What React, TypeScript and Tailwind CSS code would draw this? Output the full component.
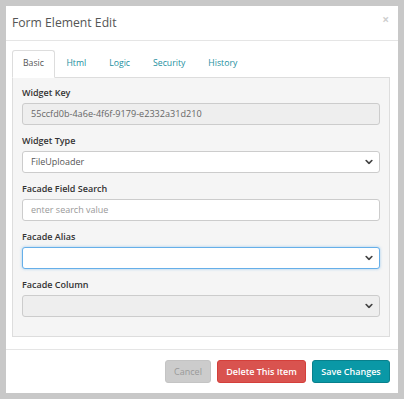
import React from "react";

const Chevron = () => (
  <svg width="8" height="5" viewBox="0 0 8 5" className="absolute right-[6px] top-1/2 -translate-y-1/2">
    <path d="M1.2 1 L4 3.8 L6.8 1" fill="none" stroke="#444" strokeWidth="1.7" strokeLinecap="round" strokeLinejoin="round" />
  </svg>
);

function Field({ label, children }: { label: string; children: React.ReactNode }) {
  return (
    <div className="mb-[9px] flex flex-col">
      <div className="h-[14px] leading-[14px] text-[9px] font-semibold text-[#333] mb-[3px]">{label}</div>
      {children}
    </div>
  );
}

export default function App() {
  const tabs = ["Basic", "Html", "Logic", "Security", "History"];
  return (
    <div className="w-[404px] h-[399px] bg-[#c8c8c8] p-[6px]" style={{ fontFamily: '"Open Sans", sans-serif' }}>
      <div className="w-[392px] h-[387px] bg-white flex flex-col">
        <div className="h-[35px] border-b border-[#e5e5e5] flex items-center justify-between pl-[6px] pr-[9px]">
          <div className="text-[12.2px] text-[#555]">Form Element Edit</div>
          <div className="text-[12px] leading-none text-[#cfcfcf] font-bold -mt-[6px]">×</div>
        </div>
        <div className="h-[308px] pl-[6px] pr-[8px] pt-[10px]">
          <div className="flex h-[27px] items-end border-b border-[#ddd]">
            {tabs.map((t, i) =>
              i === 0 ? (
                <div
                  key={t}
                  className="h-[28px] -mb-px px-[10px] mr-[1px] bg-white border border-[#ddd] border-b-white rounded-t-[3px] flex items-center text-[8.7px] text-[#555]"
                >
                  {t}
                </div>
              ) : (
                <div key={t} className="h-[27px] px-[10.5px] mr-[2px] flex items-center text-[8.7px] text-[#1b8fa0]">
                  {t}
                </div>
              )
            )}
          </div>
          <div className="bg-[#f5f5f5] border border-t-0 border-[#ddd] px-[9px] pt-[8px] pb-[10px]">
            <Field label="Widget Key">
              <div className="h-[22px] bg-[#eeeeee] border border-[#ccc] rounded-[3px] px-[8px] flex items-center text-[9.1px] text-[#666]">
                55ccfd0b-4a6e-4f6f-9179-e2332a31d210
              </div>
            </Field>
            <Field label="Widget Type">
              <div className="relative h-[22px] bg-white border border-[#ccc] rounded-[3px] px-[8px] flex items-center text-[9px] text-[#555]">
                FileUploader
                <Chevron />
              </div>
            </Field>
            <Field label="Facade Field Search">
              <div className="h-[22px] bg-white border border-[#ccc] rounded-[3px] px-[8px] flex items-center text-[9px] text-[#999]">
                enter search value
              </div>
            </Field>
            <Field label="Facade Alias">
              <div className="relative h-[22px] bg-white border border-[#66afe9] rounded-[3px] px-[8px] flex items-center text-[9px] shadow-[0_0_3px_rgba(102,175,233,0.6)]">
                <Chevron />
              </div>
            </Field>
            <Field label="Facade Column">
              <div className="relative h-[22px] bg-[#eeeeee] border border-[#ccc] rounded-[3px] px-[8px] flex items-center text-[9px]">
                <Chevron />
              </div>
            </Field>
          </div>
        </div>
        <div className="flex-1 border-t border-[#e5e5e5] flex items-start justify-end pt-[10px] pr-[8px] gap-[6px]">
          <div className="h-[23px] w-[46px] rounded-[3px] bg-[#cccccc] border border-[#c4c4c4] flex items-center justify-center text-[9px] text-[#999]">
            Cancel
          </div>
          <div className="h-[23px] w-[89px] rounded-[3px] bg-[#d9534f] border border-[#d43f3a] flex items-center justify-center text-[9px] font-semibold text-white">
            Delete This Item
          </div>
          <div className="h-[23px] w-[78px] rounded-[3px] bg-[#0a98a6] border border-[#08808c] flex items-center justify-center text-[9px] font-semibold text-white">
            Save Changes
          </div>
        </div>
      </div>
    </div>
  );
}
